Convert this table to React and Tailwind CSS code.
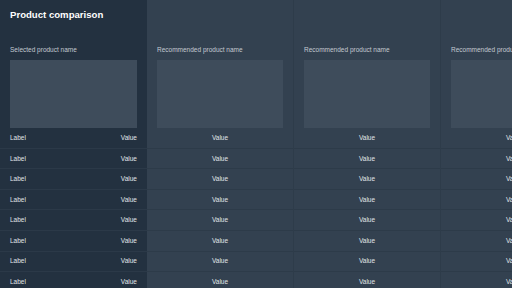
const ROWS = 8;
const COLUMNS = [
  { name: 'Selected product name', selected: true },
  { name: 'Recommended product name' },
  { name: 'Recommended product name' },
  { name: 'Recommended product name' },
];

const ProductColumn = ({ column }) => {
  const sel = column.selected;
  return (
    <div
      className={`flex flex-col w-[147px] shrink-0 ${
        sel ? 'bg-[#233140]' : 'bg-[#334150] border-r border-[#2e3c4a]'
      }`}
    >
      {/* header */}
      <div className="h-[40px] shrink-0 px-[10px] pt-[8px]">
        {sel && (
          <h1 className="text-[9.6px] leading-[14px] font-bold text-white whitespace-nowrap">Product comparison</h1>
        )}
      </div>
      <div className="h-[20px] shrink-0 px-[10px] flex items-center">
        <span className="text-[6.5px] text-[#c3c9d0] whitespace-nowrap">{column.name}</span>
      </div>
      <div className="px-[10px] shrink-0">
        <div className="h-[68px] bg-[#3e4c5b]" />
      </div>

      {/* rows */}
      {Array.from({ length: ROWS }).map((_, i) => (
        <div
          key={i}
          className={`h-[20.6px] shrink-0 flex items-center text-[6.5px] text-[#e1e5e9] border-b whitespace-nowrap ${
            sel ? 'px-[10px] justify-between border-[#2b3948]' : 'justify-center border-[#2d3b49]'
          }`}
        >
          {sel && <span>Label</span>}
          <span>Value</span>
        </div>
      ))}
    </div>
  );
};

export default function App() {
  return (
    <div
      className="w-[512px] h-[288px] overflow-hidden flex bg-[#334150]"
      style={{ fontFamily: '"Liberation Sans", Arial, sans-serif' }}
    >
      {COLUMNS.map((c, i) => (
        <ProductColumn key={i} column={c} />
      ))}
    </div>
  );
}
